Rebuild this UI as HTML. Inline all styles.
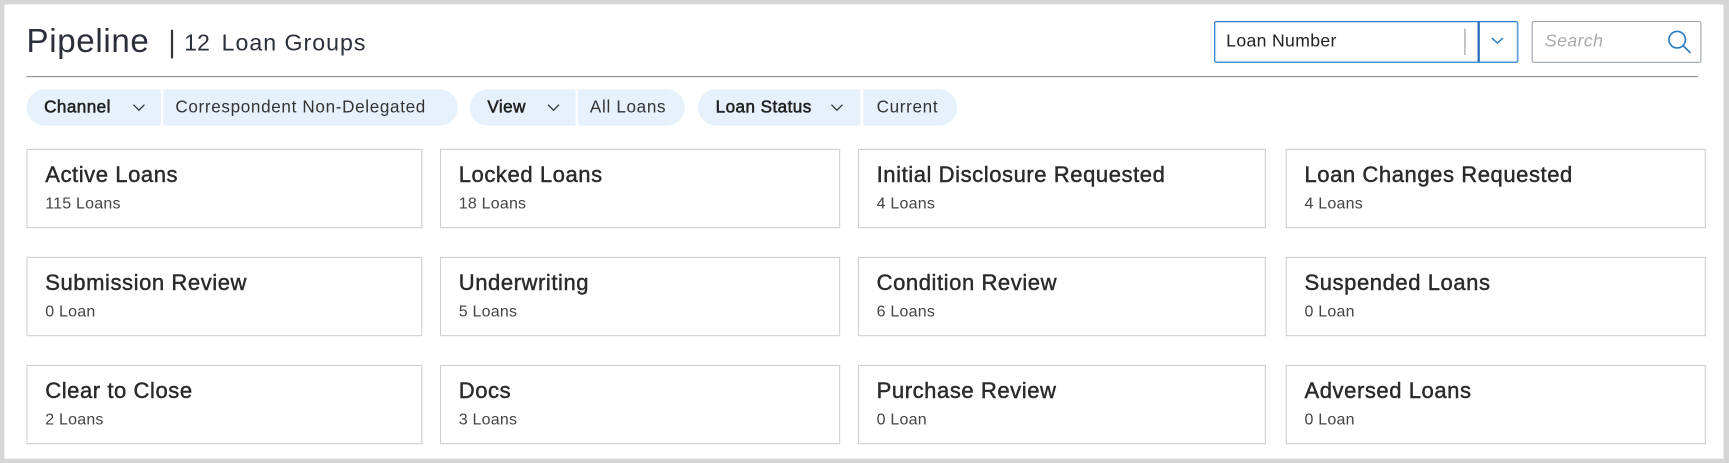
<!DOCTYPE html>
<html><head><meta charset="utf-8"><style>
html,body{margin:0;padding:0;width:1729px;height:463px;overflow:hidden;background:#d6d6d6}
#w{position:absolute;left:0;top:0;width:1568px;height:420px;transform:scale(1.10268,1.10238);transform-origin:0 0;font-family:"Liberation Sans",sans-serif;color:#2b2b2b}
.panel{position:absolute;left:4px;top:4px;width:1559px;height:412px;background:#fff}
.abs{position:absolute}
.title{left:24px;top:21px;font-size:30px;color:#2a2f3a;letter-spacing:0.6px}
.sep{left:155px;top:27px;width:2px;height:26px;background:#333}
.cnt{left:167px;top:28px;font-size:21px;color:#2a2f3a}
.grp{left:201px;top:28px;font-size:21px;color:#2a2f3a;letter-spacing:0.9px}
.hr{left:24px;top:69px;width:1516px;height:1px;background:#8a8fa0}
.sel{left:1101px;top:19px;width:274px;height:36px;border:1px solid #2a7bc8;border-radius:2px;box-shadow:0 0 0 1px #cfe3f7 inset}
.sel span{position:absolute;left:10px;top:9px;font-size:16px;color:#222;letter-spacing:0.3px}
.pill{top:81px;height:33px;background:#e6f1fc;font-size:15.5px;line-height:33px;color:#222;letter-spacing:0.6px}
.pill b{font-weight:normal;-webkit-text-stroke:0.5px #222;letter-spacing:0.4px}
.card{width:357px;height:70px;border:1px solid #cfcfcf;background:#fff}
.card b{position:absolute;left:16px;top:12px;font-size:20px;font-weight:normal;color:#2a2a2a;-webkit-text-stroke:0.4px #2a2a2a;letter-spacing:0.5px;white-space:nowrap}
.card i{position:absolute;left:16px;top:41px;font-size:14.5px;font-style:normal;color:#444;letter-spacing:0.2px}
</style></head><body><div id="w">
<div class="panel"></div>
<div class="abs title">Pipeline</div>
<div class="abs sep"></div>
<div class="abs cnt">12</div>
<div class="abs grp">Loan Groups</div>
<div class="abs hr"></div>
<div class="abs sel"><span>Loan Number</span>
 <div class="abs" style="left:226px;top:6px;width:1px;height:24px;background:#999"></div>
 <div class="abs" style="left:238px;top:0;width:2px;height:36px;background:#1f6cb8"></div>
 <svg class="abs" style="left:250px;top:13px" width="12" height="8"><path d="M1 1.5L6 6L11 1.5" fill="none" stroke="#2a7bc8" stroke-width="1.3"/></svg>
</div>
<div class="abs" style="left:1389px;top:19px;width:152px;height:36px;border:1px solid #9aa0ad;border-radius:2px">
 <span class="abs" style="left:11px;top:9px;font-size:16px;font-style:italic;color:#aaa;letter-spacing:0.4px">Search</span>
 <svg class="abs" style="left:121px;top:6px" width="24" height="24"><circle cx="10" cy="10" r="7.5" fill="none" stroke="#2a7bc8" stroke-width="1.5"/><path d="M15.5 15.5L22 22" stroke="#2a7bc8" stroke-width="1.5"/></svg>
</div>
<div class="abs pill" style="left:24px;width:122px;border-radius:17px 0 0 17px"><b style="margin-left:16px">Channel</b><svg class="abs" style="left:96px;top:13px" width="12" height="8"><path d="M1 1L6 6L11 1" fill="none" stroke="#333" stroke-width="1.1"/></svg></div>
<div class="abs pill" style="left:148px;width:267px;border-radius:0 17px 17px 0"><span style="margin-left:11px;color:#333">Correspondent Non-Delegated</span></div>
<div class="abs pill" style="left:426px;width:96px;border-radius:17px 0 0 17px"><b style="margin-left:16px">View</b><svg class="abs" style="left:70px;top:13px" width="12" height="8"><path d="M1 1L6 6L11 1" fill="none" stroke="#333" stroke-width="1.1"/></svg></div>
<div class="abs pill" style="left:524px;width:97px;border-radius:0 17px 17px 0"><span style="margin-left:11px;color:#333">All Loans</span></div>
<div class="abs pill" style="left:633px;width:147px;border-radius:17px 0 0 17px"><b style="margin-left:16px">Loan Status</b><svg class="abs" style="left:120px;top:13px" width="12" height="8"><path d="M1 1L6 6L11 1" fill="none" stroke="#333" stroke-width="1.1"/></svg></div>
<div class="abs pill" style="left:783px;width:85px;border-radius:0 17px 17px 0"><span style="margin-left:12px;color:#333">Current</span></div>

<div class="abs card" style="left:24px;top:135px;width:357px"><b>Active Loans</b><i>115 Loans</i></div>
<div class="abs card" style="left:399px;top:135px;width:361px"><b>Locked Loans</b><i>18 Loans</i></div>
<div class="abs card" style="left:778px;top:135px;width:368px"><b>Initial Disclosure Requested</b><i>4 Loans</i></div>
<div class="abs card" style="left:1166px;top:135px;width:379px"><b>Loan Changes Requested</b><i>4 Loans</i></div>
<div class="abs card" style="left:24px;top:233px;width:357px"><b>Submission Review</b><i>0 Loan</i></div>
<div class="abs card" style="left:399px;top:233px;width:361px"><b>Underwriting</b><i>5 Loans</i></div>
<div class="abs card" style="left:778px;top:233px;width:368px"><b>Condition Review</b><i>6 Loans</i></div>
<div class="abs card" style="left:1166px;top:233px;width:379px"><b>Suspended Loans</b><i>0 Loan</i></div>
<div class="abs card" style="left:24px;top:331px;width:357px"><b>Clear to Close</b><i>2 Loans</i></div>
<div class="abs card" style="left:399px;top:331px;width:361px"><b>Docs</b><i>3 Loans</i></div>
<div class="abs card" style="left:778px;top:331px;width:368px"><b>Purchase Review</b><i>0 Loan</i></div>
<div class="abs card" style="left:1166px;top:331px;width:379px"><b>Adversed Loans</b><i>0 Loan</i></div>
</div></body></html>
